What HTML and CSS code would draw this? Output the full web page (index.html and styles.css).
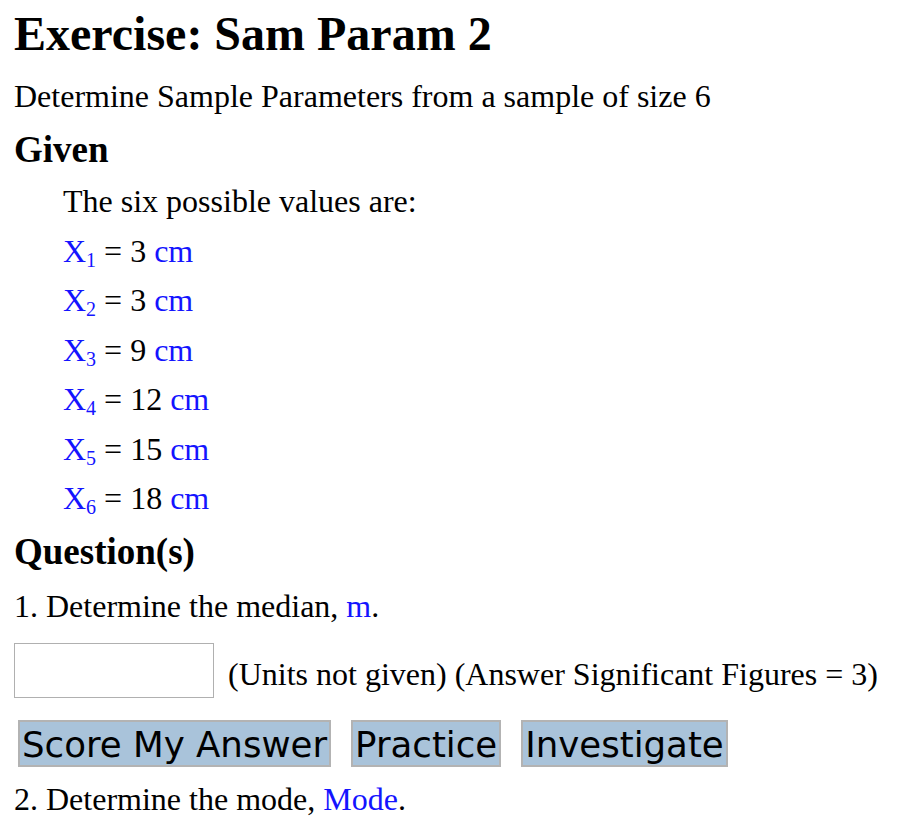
FILE: index.html
```html
<!DOCTYPE html>
<html>
<head>
<meta charset="utf-8">
<link rel="stylesheet" href="styles.css">
</head>
<body>
<div class="page">
  <h2 class="title">Exercise: Sam Param 2</h2>
  <p class="line subtitle">Determine Sample Parameters from a sample of size 6</p>
  <h3 class="heading given">Given</h3>
  <div class="values">
    <div class="row">The six possible values are:</div>
    <div class="row"><span class="var">X<sub>1</sub></span> = 3 <span class="var">cm</span></div>
    <div class="row"><span class="var">X<sub>2</sub></span> = 3 <span class="var">cm</span></div>
    <div class="row"><span class="var">X<sub>3</sub></span> = 9 <span class="var">cm</span></div>
    <div class="row"><span class="var">X<sub>4</sub></span> = 12 <span class="var">cm</span></div>
    <div class="row"><span class="var">X<sub>5</sub></span> = 15 <span class="var">cm</span></div>
    <div class="row"><span class="var">X<sub>6</sub></span> = 18 <span class="var">cm</span></div>
  </div>
  <h3 class="heading questions">Question(s)</h3>
  <p class="line q1">1. Determine the median, <span class="var">m</span>.</p>
  <div class="answer">
    <input class="box" type="text">
    <span class="note">(Units not given) (Answer Significant Figures = 3)</span>
  </div>
  <div class="buttons">
    <button class="btn">Score My Answer</button>
    <button class="btn">Practice</button>
    <button class="btn">Investigate</button>
  </div>
  <p class="line q2">2. Determine the mode, <span class="var">Mode</span>.</p>
</div>
</body>
</html>
```
FILE: styles.css
```css
html, body {
  margin: 0;
  padding: 0;
  background: #ffffff;
}
body {
  font-family: "Liberation Serif", "Times New Roman", serif;
  color: #000000;
}
.page {
  padding: 0 14px;
}
.title {
  margin: 6px 0 0 0;
  font-size: 48px;
  line-height: 56px;
  font-weight: bold;
}
.line {
  margin: 0;
  font-size: 32px;
  line-height: 40px;
}
.subtitle {
  margin-top: 14px;
}
.heading {
  margin: 0;
  font-size: 37px;
  line-height: 44px;
  font-weight: bold;
}
.given {
  margin-top: 12px;
}
.values {
  margin-top: 5px;
  padding-left: 49px;
  font-size: 32px;
}
.row {
  height: 49.5px;
  line-height: 49.5px;
}
.var {
  color: #1414ff;
}
sub {
  font-size: 20px;
  line-height: 0;
  vertical-align: -5px;
}
.questions {
  margin-top: 6px;
}
.q1 {
  margin-top: 12px;
}
.answer {
  display: flex;
  align-items: flex-start;
  margin-top: 17px;
}
.box {
  box-sizing: border-box;
  width: 200px;
  height: 55px;
  margin: 0;
  border: 1.5px solid #b0b0b0;
  background: #ffffff;
  padding: 0;
}
.note {
  margin-top: 11px;
  margin-left: 14px;
  font-size: 32px;
  line-height: 40px;
}
.buttons {
  display: flex;
  gap: 20px;
  margin-top: 22px;
  margin-left: 4px;
}
.btn {
  box-sizing: border-box;
  height: 47px;
  margin: 0;
  padding: 3px 2px 0 2px;
  border: 2px solid #b3b3b3;
  background: #a9c3da;
  color: #000000;
  font-family: "DejaVu Sans", Verdana, sans-serif;
  font-size: 35.6px;
  line-height: 40px;
  border-radius: 0;
}
.q2 {
  margin-top: 12px;
}
```
